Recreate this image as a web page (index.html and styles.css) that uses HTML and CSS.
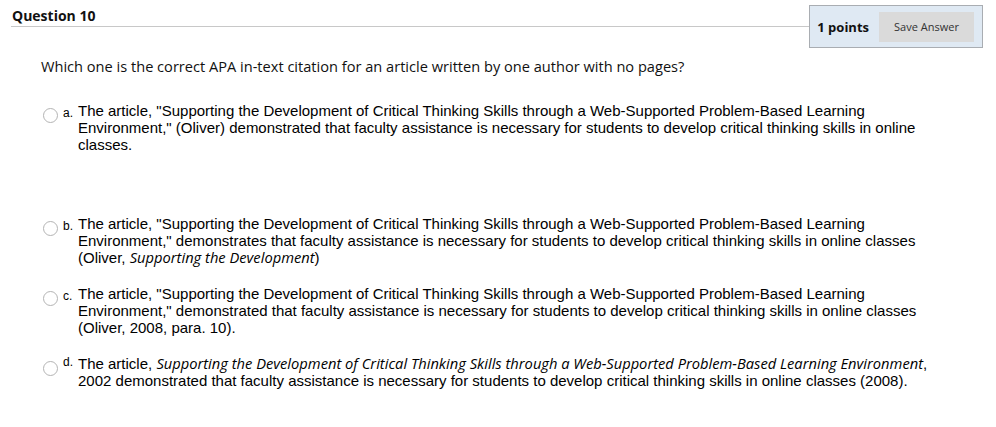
FILE: index.html
```html
<!DOCTYPE html>
<html>
<head>
<meta charset="utf-8">
<link rel="stylesheet" href="styles.css">
</head>
<body>
<div class="question">
  <div class="header">
    <h2 class="title">Question 10</h2>
    <div class="points-box">
      <span class="points">1 points</span>
      <button class="save">Save Answer</button>
    </div>
  </div>
  <p class="prompt">Which one is the correct APA in-text citation for an article written by one author with no pages?</p>
  <ul class="options">
    <li class="option option-a">
      <span class="radio"></span>
      <span class="letter">a.</span>
      <span class="text">The article, "Supporting the Development of Critical Thinking Skills through a Web-Supported Problem-Based Learning Environment," (Oliver) demonstrated that faculty assistance is necessary for students to develop critical thinking skills in online classes.</span>
    </li>
    <li class="option">
      <span class="radio"></span>
      <span class="letter">b.</span>
      <span class="text">The article, "Supporting the Development of Critical Thinking Skills through a Web-Supported Problem-Based Learning Environment," demonstrates that faculty assistance is necessary for students to develop critical thinking skills in online classes (Oliver, <em>Supporting the Development</em>)</span>
    </li>
    <li class="option">
      <span class="radio"></span>
      <span class="letter">c.</span>
      <span class="text">The article, "Supporting the Development of Critical Thinking Skills through a Web-Supported Problem-Based Learning Environment," demonstrated that faculty assistance is necessary for students to develop critical thinking skills in online classes (Oliver, 2008, para. 10).</span>
    </li>
    <li class="option">
      <span class="radio"></span>
      <span class="letter letter-raised">d.</span>
      <span class="text">The article, <em>Supporting the Development of Critical Thinking Skills through a Web-Supported Problem-Based Learning Environment</em>, 2002 demonstrated that faculty assistance is necessary for students to develop critical thinking skills in online classes (2008).</span>
    </li>
  </ul>
</div>
</body>
</html>
```
FILE: styles.css
```css
* { box-sizing: border-box; }
body {
  margin: 0;
  background: #fff;
  color: #000;
  font-family: "Open Sans", "Liberation Sans", sans-serif;
}
.question {
  padding: 5px 13px 0 11px;
}
.header {
  display: flex;
  align-items: flex-start;
}
.title {
  flex: 1;
  margin: 0;
  font-size: 14px;
  font-weight: 700;
  line-height: 20px;
  padding: 1px 0 0 1px;
  border-bottom: 1px solid #c8c8c8;
  color: #111;
}
.points-box {
  display: flex;
  align-items: center;
  gap: 10px;
  height: 43px;
  padding: 0 8px 0 7px;
  background: #dfe9f3;
  border: 1px solid #a9adb2;
}
.points {
  font-size: 13px;
  font-weight: 700;
  color: #111;
}
.save {
  height: 30px;
  width: 95px;
  border: 0;
  background: #dadada;
  font-family: "Open Sans", "Liberation Sans", sans-serif;
  font-size: 11px;
  color: #333;
  padding: 0;
}
.prompt {
  margin: 8px 0 0 30px;
  font-size: 14.6px;
  line-height: 20px;
  color: #111;
}
.options {
  list-style: none;
  margin: 26px 0 0 32px;
  padding: 0;
}
.option {
  display: flex;
  align-items: flex-start;
  margin-bottom: 19px;
  font-family: "Liberation Sans", Arial, sans-serif;
  font-size: 15px;
  line-height: 17px;
}
.option-a {
  margin-bottom: 62px;
}
.radio {
  flex: none;
  width: 15px;
  height: 15px;
  margin-top: 6px;
  border: 1px solid #b4b4b4;
  border-radius: 50%;
  background: #fff;
}
.letter {
  flex: none;
  margin-left: 5px;
  width: 15px;
  font-size: 12px;
  padding-top: 3px;
}
.letter-raised {
  padding-top: 0;
  margin-top: -1px;
}
.text {
  flex: 1;
  max-width: 864px;
}
.text em {
  font-family: "Open Sans", sans-serif;
  font-size: 14.7px;
  font-style: italic;
}
```
